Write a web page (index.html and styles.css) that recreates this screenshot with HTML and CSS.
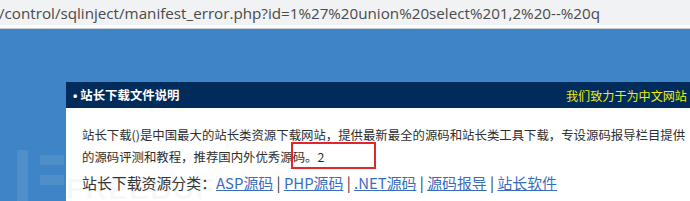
FILE: index.html
```html
<!DOCTYPE html>
<html lang="zh">
<head>
<meta charset="utf-8">
<title>manifest_error</title>
<link rel="stylesheet" href="styles.css">
</head>
<body>
<div class="urlbar"><span class="url">/control/sqlinject/manifest_error.php?id=1%27%20union%20select%201,2%20--%20q</span></div>
<div class="urlsep"></div>
<div class="page">
  <div class="box">
    <div class="boxhead">
      <div class="title"><span class="dot">•</span>站长下载文件说明</div>
      <div class="slogan">我们致力于为中文网站</div>
    </div>
    <div class="boxbody">
      <p class="intro">站长下载()是中国最大的站长类资源下载网站，提供最新最全的源码和站长类工具下载，专设源码报导栏目提供<br>的源码评测和教程，推荐国内外优秀源码。2</p>
      <p class="cats">站长下载资源分类：<a href="#">ASP源码</a> | <a href="#">PHP源码</a> | <a href="#">.NET源码</a> | <a href="#">源码报导</a> | <a href="#">站长软件</a></p>
    </div>
  </div>
</div>
<div class="mark"></div>
<div class="watermark"><span class="wm-icon"></span><span class="wm-text">FREEBUF</span></div>
</body>
</html>
```
FILE: styles.css
```css
html, body {
  margin: 0;
  padding: 0;
  width: 690px;
  height: 201px;
  overflow: hidden;
  background: #3d85c6;
  font-family: "Noto Sans CJK SC", "Noto Sans", sans-serif;
}
.urlbar {
  height: 25px;
  background: #f1f2f4;
  display: flex;
  align-items: center;
  overflow: hidden;
  white-space: nowrap;
}
.url {
  font-family: "Open Sans", "Noto Sans", sans-serif;
  font-size: 15.2px;
  color: #4a4a4a;
  margin-left: -1px;
}
.urlsep {
  height: 3px;
  background: #ffffff;
  border-bottom: 1px solid #c9ced4;
}
.page {
  padding: 53px 0 0 66px;
  background: #3d85c6;
  height: 200px;
}
.box {
  width: 700px;
  background: #ffffff;
  height: 200px;
}
.boxhead {
  height: 26px;
  background: #002b5a;
  display: flex;
  align-items: center;
  padding-left: 7px;
  white-space: nowrap;
}
.title {
  flex: 0 0 493px;
  color: #ffffff;
  font-weight: bold;
  font-size: 12.4px;
}
.dot {
  font-family: "Liberation Sans", sans-serif;
  margin-right: 3px;
}
.slogan {
  color: #f0f000;
  font-size: 12.1px;
}
.boxbody {
  padding: 16px 0 0 16px;
  white-space: nowrap;
}
.intro {
  margin: 0;
  font-size: 12.4px;
  line-height: 22px;
  color: #2e2e2e;
}
.cats {
  margin: 4px 0 0 0;
  font-size: 14.9px;
  line-height: 22px;
  color: #333333;
}
.cats a {
  color: #3a6dbd;
  text-decoration: underline;
}
.mark {
  position: absolute;
  left: 291px;
  top: 142px;
  width: 81px;
  height: 23px;
  border: 2px solid #e3262b;
}
.watermark {
  position: absolute;
  left: 14px;
  top: 150px;
  display: flex;
  align-items: flex-end;
  gap: 2px;
  pointer-events: none;
}
.wm-icon {
  width: 50px;
  height: 51px;
  background:
    linear-gradient(rgba(230,235,240,0.10), rgba(230,235,240,0.10)) 3px 0 / 11px 51px no-repeat,
    linear-gradient(rgba(230,235,240,0.10), rgba(230,235,240,0.10)) 26px 5px / 24px 10px no-repeat,
    linear-gradient(rgba(230,235,240,0.10), rgba(230,235,240,0.10)) 26px 25px / 24px 10px no-repeat;
}
.wm-text {
  font-family: "Liberation Sans", sans-serif;
  font-weight: bold;
  font-size: 30px;
  line-height: 24px;
  color: rgba(120,130,140,0.06);
  letter-spacing: 1px;
}
```
